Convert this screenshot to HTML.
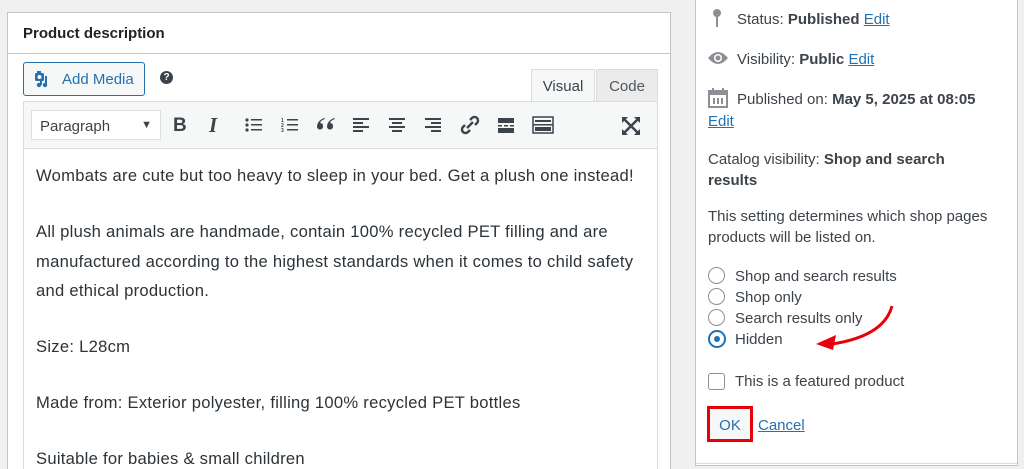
<!DOCTYPE html>
<html><head><meta charset="utf-8"><style>
*{box-sizing:border-box;margin:0;padding:0}
html,body{width:1024px;height:469px;overflow:hidden}
body{background:#f0f0f1;font-family:"Liberation Sans",sans-serif;color:#1d2327;position:relative}
.lp{position:absolute;left:7px;top:12px;width:664px;height:500px;background:#fff;border:1px solid #c3c4c7}
.hd{height:41px;border-bottom:1px solid #c3c4c7;font-weight:bold;font-size:15px;padding:12px 0 0 15px}
.am{position:absolute;left:15px;top:49px;width:122px;height:34px;border:1px solid #2271b1;border-radius:3px;color:#2271b1;font-size:15px;padding:8px 0 0 38px;background:#f6f7f7}
.q{position:absolute;left:152px;top:58px;width:13px;height:13px;border-radius:50%;background:#3c434a;color:#fff;font-size:10px;font-weight:bold;text-align:center;line-height:13px}
.tab{position:absolute;top:56px;height:33px;font-size:15px;color:#50575e;padding-top:8px;text-align:center;border:1px solid #dcdcde;border-bottom:none}
.ed{position:absolute;left:15px;top:88px;width:635px;height:420px;border:1px solid #dcdcde}
.tb{height:47px;background:#f6f7f7;border-bottom:1px solid #dcdcde;position:relative}
.sel{position:absolute;left:7px;top:8px;width:130px;height:30px;background:#fff;border:1px solid #e0e0e0;font-size:15px;padding:7px 0 0 8px;color:#3c434a}
.ic{position:absolute;top:12px;font-size:19px;color:#3c434a;font-weight:bold}
.ct{padding:12px 12px;font-size:16.6px;line-height:29.5px;color:#2c3338;letter-spacing:0.27px}
.ct p{margin-bottom:26.5px}
.rp{position:absolute;left:695px;top:-5px;width:323px;height:471px;background:#fff;border:1px solid #c3c4c7}
.r{position:absolute;left:12px;font-size:15px;color:#3c434a;line-height:21px}
a{color:#2271b1;text-decoration:underline}
.rd{position:absolute;left:12px;width:17px;height:17px;border:1px solid #8c8f94;border-radius:50%}
.rl{position:absolute;left:39px;font-size:15px;color:#3c434a}
</style></head><body>
<div class="lp">
<div class="hd">Product description</div>
<div class="am"><svg style="position:absolute;left:10px;top:7px" width="18" height="18" viewBox="0 0 18 18"><rect x="1" y="3" width="9" height="8" rx="1.5" fill="#2271b1"/><circle cx="5.5" cy="7" r="2" fill="#fff"/><rect x="3" y="1" width="4" height="3" fill="#2271b1"/><path d="M12 6v9" stroke="#2271b1" stroke-width="2"/><circle cx="11" cy="15" r="2.2" fill="#2271b1"/><circle cx="5" cy="15" r="2.2" fill="#2271b1"/><path d="M7 11v4" stroke="#2271b1" stroke-width="2"/></svg>Add Media</div>
<div class="q">?</div>
<div class="tab" style="left:523px;width:64px;background:#f6f7f7;color:#3c434a">Visual</div>
<div class="tab" style="left:588px;width:62px;background:#ebebeb">Code</div>
<div class="ed">
<div class="tb">
<div class="sel">Paragraph<span style="position:absolute;right:8px;top:8px;font-size:11px">▼</span></div>
<span class="ic" style="left:149px;top:13px">B</span>
<span class="ic" style="left:185px;font-style:italic;font-family:'Liberation Serif';font-size:21px;top:11px">I</span>
<svg class="ic" style="left:221px;top:15px" width="18" height="16"><g fill="#3c434a"><circle cx="2" cy="3" r="1.6"/><circle cx="2" cy="8" r="1.6"/><circle cx="2" cy="13" r="1.6"/><rect x="6" y="2" width="11" height="1.5"/><rect x="6" y="7" width="11" height="1.5"/><rect x="6" y="12" width="11" height="1.5"/></g></svg>
<svg class="ic" style="left:257px;top:15px" width="18" height="16"><g fill="#3c434a" font-size="5" font-family="Liberation Sans"><text x="0" y="5">1</text><text x="0" y="10">2</text><text x="0" y="15">3</text><rect x="6" y="2" width="11" height="1.5"/><rect x="6" y="7" width="11" height="1.5"/><rect x="6" y="12" width="11" height="1.5"/></g></svg>
<svg class="ic" style="left:292px;top:16px" width="20" height="14"><g fill="#3c434a"><path d="M8 0q-7 3-7 9a3 3 0 106-1q0-3-3-3q1-3 5-4z"/><path d="M18 0q-7 3-7 9a3 3 0 106-1q0-3-3-3q1-3 5-4z"/></g></svg>
<svg class="ic" style="left:328px;top:15px" width="18" height="16"><g fill="#3c434a"><rect x="1" y="1" width="16" height="2"/><rect x="1" y="5" width="10" height="2"/><rect x="1" y="9" width="16" height="2"/><rect x="1" y="13" width="10" height="2"/></g></svg>
<svg class="ic" style="left:364px;top:15px" width="18" height="16"><g fill="#3c434a"><rect x="1" y="1" width="16" height="2"/><rect x="4" y="5" width="10" height="2"/><rect x="1" y="9" width="16" height="2"/><rect x="4" y="13" width="10" height="2"/></g></svg>
<svg class="ic" style="left:400px;top:15px" width="18" height="16"><g fill="#3c434a"><rect x="1" y="1" width="16" height="2"/><rect x="7" y="5" width="10" height="2"/><rect x="1" y="9" width="16" height="2"/><rect x="7" y="13" width="10" height="2"/></g></svg>
<svg class="ic" style="left:435px;top:12px" width="22" height="22"><path d="M8 14l6-6M6 11l-2 2a3.5 3.5 0 005 5l2-2M16 11l2-2a3.5 3.5 0 00-5-5l-2 2" stroke="#3c434a" stroke-width="2.4" fill="none"/></svg>
<svg class="ic" style="left:473px;top:15px" width="18" height="16"><g fill="#3c434a"><rect x="1" y="1" width="16" height="5"/><rect x="1" y="8" width="4" height="1.5"/><rect x="7" y="8" width="4" height="1.5"/><rect x="13" y="8" width="4" height="1.5"/><rect x="1" y="11" width="16" height="5"/></g></svg>
<svg class="ic" style="left:508px;top:14px" width="22" height="18"><rect x="1" y="1" width="20" height="16" fill="none" stroke="#3c434a" stroke-width="1.5"/><g fill="#3c434a"><rect x="3" y="4" width="16" height="2"/><rect x="1" y="8" width="20" height="1.5"/><rect x="3" y="11" width="16" height="4"/></g></svg>
<svg class="ic" style="left:598px;top:15px" width="18" height="18"><path d="M2 2l14 14M16 2L2 16" stroke="#3c434a" stroke-width="2.5"/><g fill="#3c434a"><path d="M0 0h6L0 6z"/><path d="M18 0h-6l6 6z"/><path d="M0 18h6l-6-6z"/><path d="M18 18h-6l6-6z"/></g></svg>
</div>
<div class="ct">
<p>Wombats are cute but too heavy to sleep in your bed. Get a plush one instead!</p>
<p>All plush animals are handmade, contain 100% recycled PET filling and are manufactured according to the highest standards when it comes to child safety and ethical production.</p>
<p>Size: L28cm</p>
<p>Made from: Exterior polyester, filling 100% recycled PET bottles</p>
<p>Suitable for babies &amp; small children</p>
</div>
</div>
</div>
<div class="rp">
<svg style="position:absolute;left:16px;top:13px" width="10" height="18"><circle cx="5" cy="4" r="4" fill="#8c8f94"/><rect x="4" y="6" width="2" height="12" fill="#8c8f94"/></svg>
<div class="r" style="left:41px;top:13px">Status: <b>Published</b> <a>Edit</a></div>
<svg style="position:absolute;left:11px;top:55px" width="22" height="14"><path d="M1 7q10-12 20 0q-10 12-20 0z" fill="#8c8f94"/><circle cx="11" cy="7" r="4" fill="#fff"/><circle cx="11" cy="7" r="2.5" fill="#8c8f94"/></svg>
<div class="r" style="left:41px;top:53px">Visibility: <b>Public</b> <a>Edit</a></div>
<svg style="position:absolute;left:12px;top:92px" width="20" height="20"><rect x="1" y="3" width="18" height="16" fill="none" stroke="#8c8f94" stroke-width="2"/><rect x="1" y="3" width="18" height="4" fill="#8c8f94"/><g fill="#8c8f94"><rect x="4" y="0" width="2" height="4"/><rect x="14" y="0" width="2" height="4"/><rect x="5" y="10" width="2" height="6"/><rect x="9" y="10" width="2" height="6"/><rect x="13" y="10" width="2" height="6"/></g></svg>
<div class="r" style="left:41px;top:93px">Published on: <b>May 5, 2025 at 08:05</b></div>
<div class="r" style="top:115px"><a>Edit</a></div>
<div class="r" style="top:153px;width:265px">Catalog visibility: <b>Shop and search results</b></div>
<div class="r" style="top:210px;width:305px">This setting determines which shop pages products will be listed on.</div>
<div class="rd" style="top:271px"></div><div class="rl" style="top:272px">Shop and search results</div>
<div class="rd" style="top:292px"></div><div class="rl" style="top:293px">Shop only</div>
<div class="rd" style="top:313px"></div><div class="rl" style="top:314px">Search results only</div>
<div class="rd" style="top:334px;border:2px solid #2271b1;width:18px;height:18px"><div style="position:absolute;left:4px;top:4px;width:6px;height:6px;border-radius:50%;background:#2271b1"></div></div><div class="rl" style="top:335px">Hidden</div>
<div style="position:absolute;left:12px;top:377px;width:17px;height:17px;border:1px solid #8c8f94;border-radius:3px"></div><div class="rl" style="top:377px">This is a featured product</div>
<div style="position:absolute;left:11px;top:410px;width:46px;height:36px;border:3px solid #e8000b;background:#f6f7f7;color:#2271b1;font-size:15px;text-align:center;padding-top:8px">OK</div>
<div class="r" style="left:62px;top:419px"><a>Cancel</a></div>
<div style="position:absolute;left:0;top:467px;width:100%;border-top:1px solid #dcdcde"></div>
<svg style="position:absolute;left:90px;top:300px" width="120" height="60"><path d="M106 10q-8 30-60 38" stroke="#e8000b" stroke-width="3" fill="none"/><path d="M30 48l20-9-3 15z" fill="#e8000b"/></svg>
</div>
</body></html>
